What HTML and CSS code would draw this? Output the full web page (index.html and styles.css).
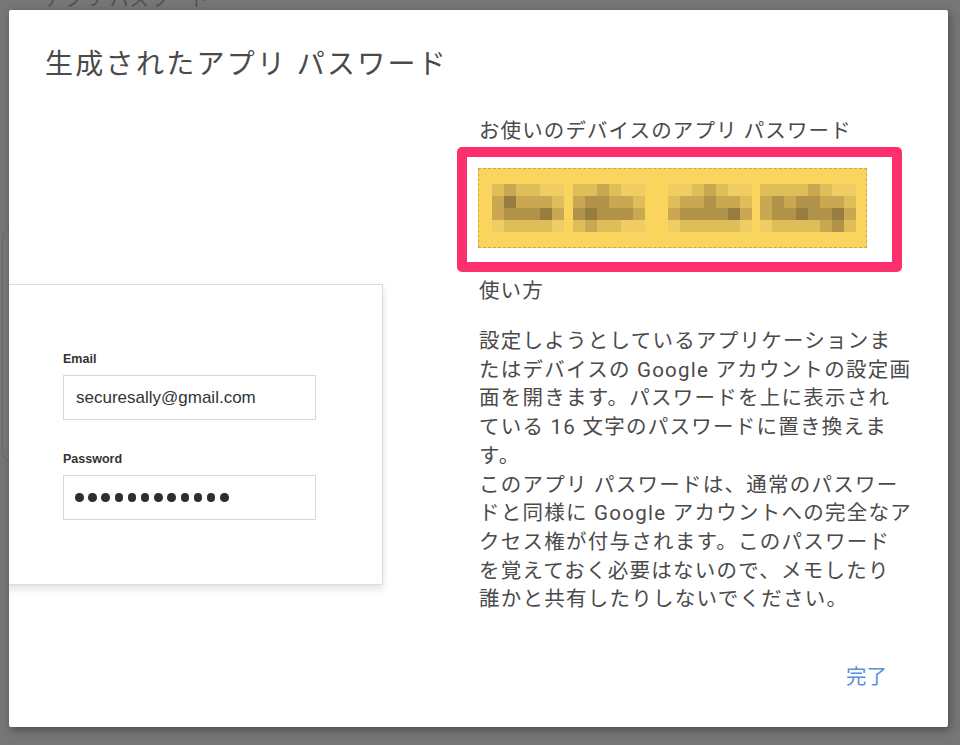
FILE: index.html
```html
<!DOCTYPE html>
<html lang="ja">
<head>
<meta charset="utf-8">
<title>生成されたアプリ パスワード</title>
<link rel="stylesheet" href="styles.css">
</head>
<body>
<div class="backdrop">
  <div class="bg-title">アプリ パスワード</div>
  <div class="bg-card"></div>
</div>
<div class="dialog">
  <h1 class="title">生成されたアプリ パスワード</h1>
  <div class="body">
    <div class="left">
      <div class="card">
        <div class="field-label">Email</div>
        <div class="input">securesally@gmail.com</div>
        <div class="field-label second">Password</div>
        <div class="input dots">
          <span></span><span></span><span></span><span></span><span></span><span></span>
          <span></span><span></span><span></span><span></span><span></span><span></span>
        </div>
      </div>
    </div>
    <div class="right">
      <div class="label">お使いのデバイスのアプリ パスワード</div>
      <div class="highlight">
        <div class="pw-box">
          <div class="mosaic g6">
            <i class="s1"></i><i class="s2"></i><i class="s1"></i><i class="s1"></i><i class="s0"></i><i class="s0"></i>
            <i class="s2"></i><i class="s4"></i><i class="s2"></i><i class="s2"></i><i class="s2"></i><i class="s1"></i>
            <i class="s2"></i><i class="s3"></i><i class="s3"></i><i class="s3"></i><i class="s4"></i><i class="s2"></i>
            <i class="s0"></i><i class="s1"></i><i class="s1"></i><i class="s1"></i><i class="s1"></i><i class="s0"></i>
          </div>
          <div class="mosaic g6 m2">
            <i class="s1"></i><i class="s1"></i><i class="s2"></i><i class="s1"></i><i class="s0"></i><i class="s0"></i>
            <i class="s2"></i><i class="s3"></i><i class="s3"></i><i class="s2"></i><i class="s2"></i><i class="s1"></i>
            <i class="s3"></i><i class="s4"></i><i class="s3"></i><i class="s3"></i><i class="s3"></i><i class="s2"></i>
            <i class="s1"></i><i class="s2"></i><i class="s1"></i><i class="s1"></i><i class="s0"></i><i class="s0"></i>
          </div>
          <div class="mosaic g7 m3">
            <i class="s0"></i><i class="s0"></i><i class="s1"></i><i class="s2"></i><i class="s1"></i><i class="s0"></i><i class="s0"></i>
            <i class="s1"></i><i class="s2"></i><i class="s2"></i><i class="s3"></i><i class="s2"></i><i class="s2"></i><i class="s1"></i>
            <i class="s2"></i><i class="s3"></i><i class="s3"></i><i class="s3"></i><i class="s3"></i><i class="s4"></i><i class="s2"></i>
            <i class="s0"></i><i class="s1"></i><i class="s1"></i><i class="s1"></i><i class="s1"></i><i class="s1"></i><i class="s0"></i>
          </div>
          <div class="mosaic g8 m4">
            <i class="s1"></i><i class="s1"></i><i class="s1"></i><i class="s1"></i><i class="s2"></i><i class="s1"></i><i class="s0"></i><i class="s0"></i>
            <i class="s2"></i><i class="s3"></i><i class="s2"></i><i class="s3"></i><i class="s3"></i><i class="s2"></i><i class="s2"></i><i class="s1"></i>
            <i class="s2"></i><i class="s3"></i><i class="s3"></i><i class="s4"></i><i class="s3"></i><i class="s3"></i><i class="s4"></i><i class="s2"></i>
            <i class="s0"></i><i class="s1"></i><i class="s1"></i><i class="s1"></i><i class="s1"></i><i class="s2"></i><i class="s3"></i><i class="s1"></i>
          </div>
        </div>
      </div>
      <div class="label howto">使い方</div>
      <p class="desc">設定しようとしているアプリケーションま<br>たはデバイスの Google アカウントの設定画<br>面を開きます。パスワードを上に表示され<br>ている 16 文字のパスワードに置き換えま<br>す。<br>このアプリ パスワードは、通常のパスワー<br>ドと同様に Google アカウントへの完全なア<br>クセス権が付与されます。このパスワード<br>を覚えておく必要はないので、メモしたり<br>誰かと共有したりしないでください。</p>
    </div>
  </div>
  <div class="footer">
    <button class="done" type="button">完了</button>
  </div>
</div>
</body>
</html>
```

FILE: styles.css
```css
html, body {
  margin: 0;
  padding: 0;
  width: 960px;
  height: 745px;
  overflow: hidden;
  background: #767676;
  font-family: "Roboto", "Noto Sans CJK JP", sans-serif;
}

.backdrop {
  position: relative;
  height: 745px;
}

.bg-title {
  margin: -12px 0 0 44px;
  font-size: 19px;
  line-height: 24px;
  color: #505050;
  letter-spacing: 1px;
}

.bg-card {
  position: absolute;
  left: 2px;
  top: 240px;
  width: 300px;
  height: 232px;
  border: 1px solid #686868;
  border-radius: 10px;
  background: #787878;
}

.dialog {
  position: absolute;
  left: 9px;
  top: 10px;
  width: 939px;
  height: 717px;
  background: #fff;
  border-radius: 2px;
  overflow: hidden;
  box-shadow: 2px 3px 8px rgba(0, 0, 0, 0.35);
  display: flex;
  flex-direction: column;
}

.title {
  margin: 0;
  padding: 37px 0 0 36px;
  font-size: 28px;
  line-height: 36px;
  font-weight: 400;
  letter-spacing: 2.3px;
  color: #4a4a4a;
}

.body {
  display: flex;
  align-items: flex-start;
}

.left {
  width: 374px;
  flex: none;
  padding-top: 201px;
}

.card {
  box-sizing: border-box;
  height: 301px;
  margin-left: -10px;
  padding: 66px 0 0 63px;
  border: 1px solid #dcdcdc;
  background: #fff;
  box-shadow: 0 4px 8px rgba(0, 0, 0, 0.12);
  font-family: "Liberation Sans", Arial, sans-serif;
}

.field-label {
  font-size: 12.5px;
  line-height: 16px;
  font-weight: 700;
  color: #333;
}

.field-label.second {
  margin-top: 31px;
}

.input {
  box-sizing: border-box;
  width: 253px;
  height: 45px;
  margin-top: 8px;
  padding: 0 0 0 12px;
  border: 1.5px solid #d8d8d8;
  display: flex;
  align-items: center;
  font-size: 17px;
  color: #333;
}

.dots {
  gap: 4.7px;
  padding-left: 11px;
}

.dots span {
  width: 8.5px;
  height: 8.5px;
  border-radius: 50%;
  background: #2e2e2e;
  flex: none;
}

.right {
  margin-left: 74px;
  padding-top: 34px;
  color: #4a4a4a;
}

.label {
  padding-left: 22px;
  font-size: 20.5px;
  line-height: 29px;
  letter-spacing: 1.1px;
  white-space: nowrap;
}

.highlight {
  box-sizing: border-box;
  width: 445px;
  height: 125px;
  margin-top: 1px;
  border: 10px solid #fd2f6c;
  border-radius: 5px;
  padding: 11px 0 0 11px;
}

.pw-box {
  box-sizing: border-box;
  width: 389px;
  height: 80px;
  background: #fad55e;
  border: 1px dashed #c9a74c;
  display: flex;
  align-items: flex-start;
  padding: 15px 0 0 13px;
}

.mosaic {
  display: grid;
  grid-template-rows: repeat(4, 12px);
  grid-auto-columns: 12px;
  flex: none;
}

.g6 { grid-template-columns: repeat(6, 12px); }
.g7 { grid-template-columns: repeat(7, 12px); }
.g8 { grid-template-columns: repeat(8, 12px); }

.m2 { margin-left: 9px; }
.m3 { margin-left: 23px; }
.m4 { margin-left: 8px; }

.mosaic i { display: block; }
.s0 { background: #efcd62; }
.s1 { background: #dfbd59; }
.s2 { background: #c9a851; }
.s3 { background: #b09348; }
.s4 { background: #977d40; }

.howto {
  margin-top: 5px;
}

.desc {
  margin: 21px 0 0;
  padding-left: 22px;
  font-size: 20.5px;
  line-height: 28.7px;
  letter-spacing: 1.25px;
  white-space: nowrap;
}

.footer {
  display: flex;
  justify-content: flex-end;
  padding: 49px 61px 0 0;
}

.done {
  border: 0;
  background: none;
  padding: 0;
  font-family: "Roboto", "Noto Sans CJK JP", sans-serif;
  font-size: 20.5px;
  line-height: 29px;
  color: #5b8fd8;
  letter-spacing: 0;
  cursor: pointer;
}
```
